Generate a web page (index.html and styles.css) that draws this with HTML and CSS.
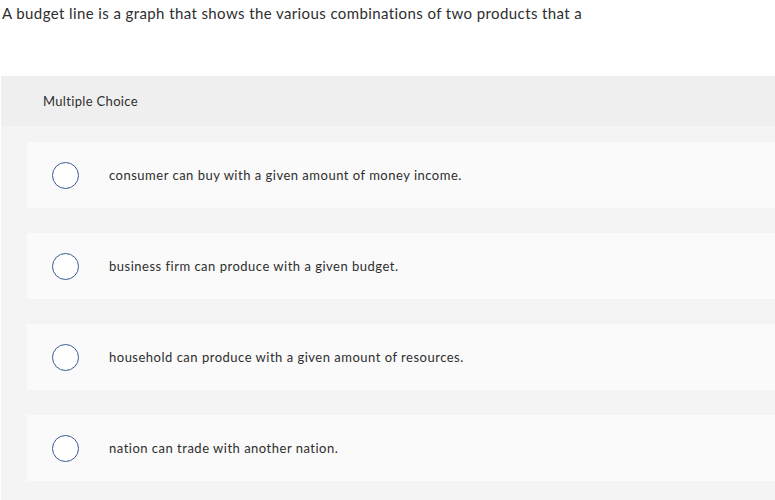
FILE: index.html
```html
<!DOCTYPE html>
<html lang="en">
<head>
  <meta charset="UTF-8">
  <title>Multiple Choice</title>
  <link rel="stylesheet" href="styles.css">
</head>
<body>
  <div class="question">
    <p class="prompt">A budget line is a graph that shows the various combinations of two products that a</p>

    <div class="choices">
      <div class="choices-header">Multiple Choice</div>

      <div class="choices-list">
        <label class="choice">
          <span class="radio"></span>
          <span class="choice-text">consumer can buy with a given amount of money income.</span>
        </label>
        <label class="choice">
          <span class="radio"></span>
          <span class="choice-text">business firm can produce with a given budget.</span>
        </label>
        <label class="choice">
          <span class="radio"></span>
          <span class="choice-text">household can produce with a given amount of resources.</span>
        </label>
        <label class="choice">
          <span class="radio"></span>
          <span class="choice-text">nation can trade with another nation.</span>
        </label>
      </div>
    </div>
  </div>
</body>
</html>
```

FILE: styles.css
```css
body {
  font-family: Lato, "Liberation Sans", sans-serif;
  color: #2e2e2e;
  background: white;
  margin: 0;
  padding: 0;
  font-variant-ligatures: none;
}
.prompt {
  margin: 0;
  padding: 3px 0 0 2px;
  height: 76px;
  box-sizing: border-box;
  font-size: 15px;
  letter-spacing: 0.4px;
  line-height: 20px;
}
.choices {
  margin-left: 1px;
}
.choices-header {
  background: #efefef;
  height: 50px;
  padding-left: 42px;
  font-size: 13px;
  letter-spacing: 0.33px;
  line-height: 50px;
}
.choices-list {
  background: #f4f4f4;
  padding: 16px 0 19px 26px;
  display: flex;
  flex-direction: column;
  gap: 25px;
}
.choice {
  background: #fafafa;
  height: 66px;
  display: flex;
  align-items: center;
  cursor: pointer;
}
.radio {
  width: 25px;
  height: 25px;
  border: 1.5px solid #3b5a93;
  border-radius: 50%;
  background: white;
  margin-left: 25px;
  flex-shrink: 0;
}
.choice-text {
  margin-left: 30px;
  font-size: 13px;
  letter-spacing: 0.5px;
}
```
